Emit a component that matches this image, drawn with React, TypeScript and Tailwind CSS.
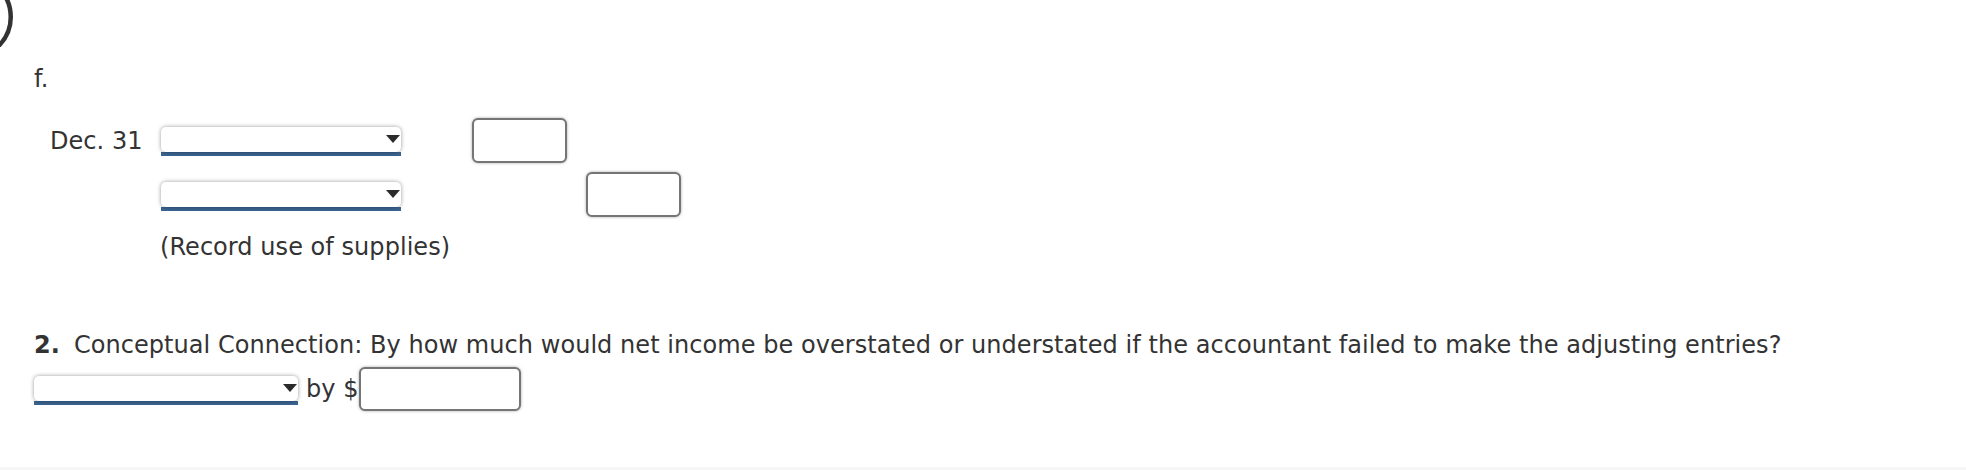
import React from "react";

function Select({ width }: { width: string }) {
  return (
    <div className={`${width} flex shrink-0 flex-col`}>
      <div className="relative h-[25px] rounded-[5px] bg-white shadow-[0_0_4px_rgba(0,0,0,0.4)]">
        <svg className="absolute right-[1px] top-[8px]" width="14" height="8" viewBox="0 0 14 8">
          <polygon points="0,0 14,0 7,8" fill="#2b2b2b" />
        </svg>
      </div>
      <div className="h-[4px] bg-[#3a6491]" />
    </div>
  );
}

function AmountInput({ width, height }: { width: string; height: string }) {
  return (
    <div
      className={`${width} ${height} shrink-0 rounded-[6px] border-2 border-[#757575] bg-white shadow-[0_0_3px_rgba(0,0,0,0.35)]`}
    />
  );
}

export default function App() {
  return (
    <div className="flex h-[470px] w-full flex-col bg-white text-[24px] leading-[29px] tracking-[0.05px] text-[#333] [font-family:'DejaVu_Sans',Verdana,sans-serif]">
      <svg className="block shrink-0" width="13" height="47" viewBox="0 0 13 47">
        <circle cx="-30" cy="17" r="40.75" fill="none" stroke="#333" strokeWidth="4.5" />
      </svg>

      <div className="mt-[18px] pl-[34px]">f.</div>

      <div className="mt-[24px] flex h-[45px] items-center">
        <div className="w-[161px] shrink-0 pl-[50px] pt-[2px]">Dec. 31</div>
        <div className="mt-[2px]">
          <Select width="w-[240px]" />
        </div>
        <div className="ml-[71px]">
          <AmountInput width="w-[95px]" height="h-[45px]" />
        </div>
      </div>

      <div className="mt-[9px] flex h-[45px] items-center">
        <div className="w-[161px] shrink-0" />
        <div className="mt-[3px]">
          <Select width="w-[240px]" />
        </div>
        <div className="ml-[185px]">
          <AmountInput width="w-[95px]" height="h-[45px]" />
        </div>
      </div>

      <div className="mt-[16px] pl-[160px]">(Record use of supplies)</div>

      <div className="mt-[69px] pl-[34px]">
        <span className="font-bold">2.</span>
        <span className="ml-[14px]">
          Conceptual Connection: By how much would net income be overstated or understated if the accountant failed to make
          the adjusting entries?
        </span>
      </div>

      <div className="mt-[7px] flex h-[44px] items-center pl-[34px]">
        <div className="mt-[2px]">
          <Select width="w-[264px]" />
        </div>
        <span className="ml-[8px] whitespace-pre">by $</span>
        <AmountInput width="w-[162px]" height="h-[44px]" />
      </div>

      <div className="mt-auto h-[3px] bg-[#f6f6f6]" />
    </div>
  );
}
